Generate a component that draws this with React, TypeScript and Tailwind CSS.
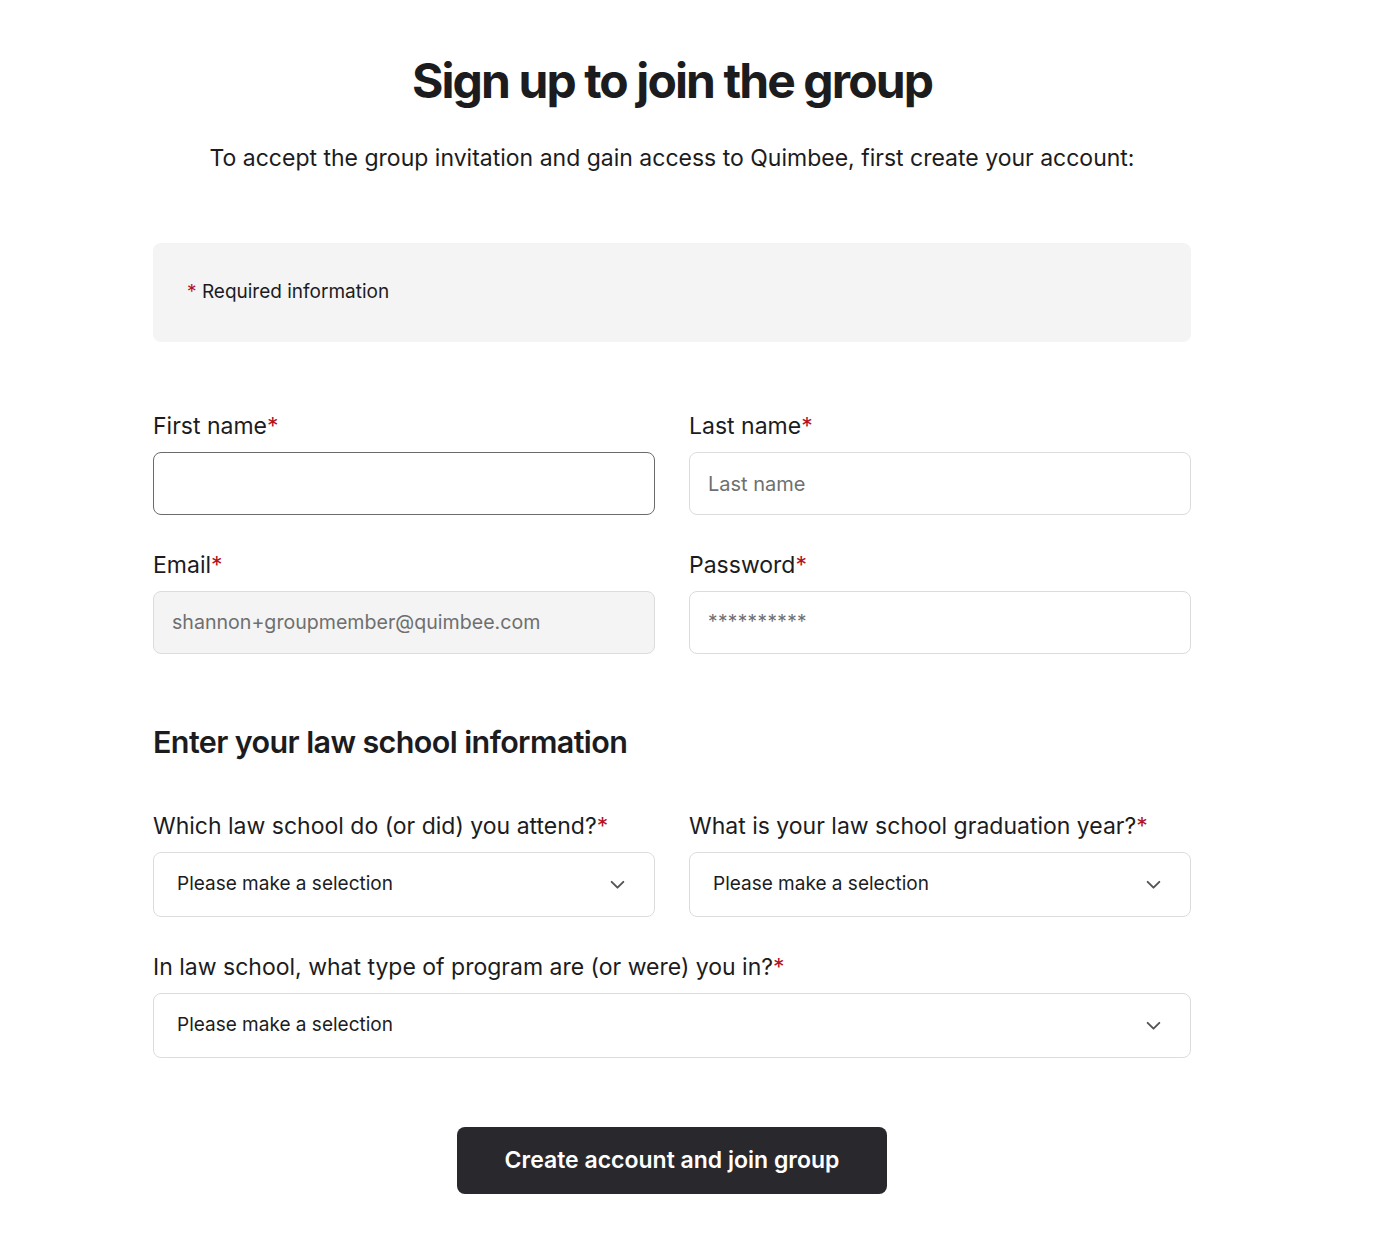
import React from "react";

const Chevron = () => (
  <svg width="17" height="17" viewBox="0 0 16 16" fill="none" stroke="#555" strokeWidth="1.8" strokeLinecap="round" strokeLinejoin="round">
    <path d="M2.5 5.5 8 11l5.5-5.5" />
  </svg>
);

const Label = ({ children }: { children: React.ReactNode }) => (
  <div className="text-[23px] leading-[28px] text-[#1c1c1e] mb-[12px]">
    {children}
    <span className="text-[#b3121e]">*</span>
  </div>
);

const Select = () => (
  <div className="h-[65px] border border-[#dcdcdc] rounded-[8px] flex items-center justify-between pl-[23px] pr-[28px] bg-white">
    <span className="text-[19px] text-[#1c1c1e]">Please make a selection</span>
    <Chevron />
  </div>
);

export default function App() {
  return (
    <div className="bg-white min-h-[1256px] pr-[32px]" style={{ fontFamily: "Inter, 'Noto Sans', sans-serif" }}>
      <div className="w-[1038px] mx-auto pt-[52px]">
        <h1 className="text-[48px] leading-[58px] font-bold text-center text-[#1c1c1e] tracking-[-0.04em]">
          Sign up to join the group
        </h1>
        <p className="text-[23px] leading-[30px] text-center text-[#1c1c1e] mt-[33px]">
          To accept the group invitation and gain access to Quimbee, first create your account:
        </p>
        <div className="mt-[70px] h-[99px] bg-[#f4f4f4] rounded-[8px] flex items-center pl-[34px]">
          <span className="text-[19px] text-[#1c1c1e]">
            <span className="text-[#b3121e]">*</span> Required information
          </span>
        </div>

        <div className="grid grid-cols-2 gap-x-[34px] gap-y-[36px] mt-[70px]">
          <div>
            <Label>First name</Label>
            <div className="h-[63px] border border-[#6b6b6b] rounded-[8px] bg-white" />
          </div>
          <div>
            <Label>Last name</Label>
            <div className="h-[63px] border border-[#dcdcdc] rounded-[8px] bg-white flex items-center pl-[18px]">
              <span className="text-[20px] text-[#6f6f6f]">Last name</span>
            </div>
          </div>
          <div>
            <Label>Email</Label>
            <div className="h-[63px] border border-[#dcdcdc] rounded-[8px] bg-[#f4f4f4] flex items-center pl-[18px]">
              <span className="text-[19.6px] text-[#6f6f6f]">shannon+groupmember@quimbee.com</span>
            </div>
          </div>
          <div>
            <Label>Password</Label>
            <div className="h-[63px] border border-[#dcdcdc] rounded-[8px] bg-white flex items-center pl-[18px]">
              <span className="text-[19px] text-[#6f6f6f] tracking-[0.02em]">**********</span>
            </div>
          </div>
        </div>

        <h2 className="text-[30.5px] leading-[38px] font-semibold text-[#1c1c1e] mt-[69px] tracking-[-0.02em]">
          Enter your law school information
        </h2>

        <div className="grid grid-cols-2 gap-x-[34px] gap-y-[36px] mt-[51px]">
          <div>
            <Label>Which law school do (or did) you attend?</Label>
            <Select />
          </div>
          <div>
            <Label>What is your law school graduation year?</Label>
            <Select />
          </div>
          <div className="col-span-2">
            <Label>In law school, what type of program are (or were) you in?</Label>
            <Select />
          </div>
        </div>

        <div className="flex justify-center mt-[69px]">
          <button className="w-[430px] h-[67px] bg-[#29292d] rounded-[8px] text-white text-[23px] font-semibold">
            Create account and join group
          </button>
        </div>
      </div>
    </div>
  );
}
